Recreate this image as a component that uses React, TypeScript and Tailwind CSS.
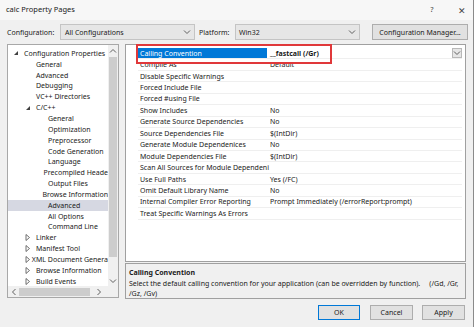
import React from "react";

const Chev = ({ dir = "down", className = "" }: { dir?: "down" | "up" | "left" | "right"; className?: string }) => {
  const paths: Record<string, string> = {
    down: "M1 2.5 L4 5.5 L7 2.5",
    up: "M1 5.5 L4 2.5 L7 5.5",
    left: "M5.5 1 L2.5 4 L5.5 7",
    right: "M2.5 1 L5.5 4 L2.5 7",
  };
  return (
    <svg width="8" height="8" viewBox="0 0 8 8" className={className}>
      <path d={paths[dir]} fill="none" stroke="#606060" strokeWidth="1" />
    </svg>
  );
};

const OpenArrow = () => (
  <svg width="6" height="6" viewBox="0 0 6 6">
    <polygon points="5,1 5,5 1,5" fill="#404040" />
  </svg>
);
const ClosedArrow = () => (
  <svg width="6" height="7" viewBox="0 0 6 7">
    <polygon points="1,0.5 4.5,3.5 1,6.5" fill="none" stroke="#606060" strokeWidth="0.9" />
  </svg>
);

type TreeItem = { t: string; lvl: number; arrow?: "open" | "closed"; sel?: boolean };
const tree: TreeItem[] = [
  { t: "Configuration Properties", lvl: 0, arrow: "open" },
  { t: "General", lvl: 1 },
  { t: "Advanced", lvl: 1 },
  { t: "Debugging", lvl: 1 },
  { t: "VC++ Directories", lvl: 1 },
  { t: "C/C++", lvl: 1, arrow: "open" },
  { t: "General", lvl: 2 },
  { t: "Optimization", lvl: 2 },
  { t: "Preprocessor", lvl: 2 },
  { t: "Code Generation", lvl: 2 },
  { t: "Language", lvl: 2 },
  { t: "Precompiled Heade", lvl: 2 },
  { t: "Output Files", lvl: 2 },
  { t: "Browse Information", lvl: 2 },
  { t: "Advanced", lvl: 2, sel: true },
  { t: "All Options", lvl: 2 },
  { t: "Command Line", lvl: 2 },
  { t: "Linker", lvl: 1, arrow: "closed" },
  { t: "Manifest Tool", lvl: 1, arrow: "closed" },
  { t: "XML Document Genera", lvl: 1, arrow: "closed" },
  { t: "Browse Information", lvl: 1, arrow: "closed" },
  { t: "Build Events", lvl: 1, arrow: "closed" },
];

const props: [string, string][] = [
  ["Calling Convention", "__fastcall (/Gr)"],
  ["Compile As", "Default"],
  ["Disable Specific Warnings", ""],
  ["Forced Include File", ""],
  ["Forced #using File", ""],
  ["Show Includes", "No"],
  ["Generate Source Dependencies", "No"],
  ["Source Dependencies File", "$(IntDir)"],
  ["Generate Module Dependenices", "No"],
  ["Module Dependencies File", "$(IntDir)"],
  ["Scan All Sources for Module Dependeni", ""],
  ["Use Full Paths", "Yes (/FC)"],
  ["Omit Default Library Name", "No"],
  ["Internal Compiler Error Reporting", "Prompt Immediately (/errorReport:prompt)"],
  ["Treat Specific Warnings As Errors", ""],
];

const padFor = (lvl: number) => (lvl === 0 ? "pl-[5px]" : lvl === 1 ? "pl-[17px]" : "pl-[29px]");

export default function App() {
  return (
    <div className="w-[474px] h-[327px] bg-[#f0f0f0] overflow-hidden text-[7px] leading-none text-[#1a1a1a] font-['Noto_Sans',sans-serif] flex flex-col border-r border-[#8a8a8a]">
      {/* title */}
      <div className="h-[20px] bg-[#f7f7f7] flex items-center pl-[6px]">
        <span className="text-[7.5px]">calc Property Pages</span>
        <div className="ml-auto flex items-center">
          <span className="w-[20px] text-center text-[7.5px] text-[#444]">?</span>
          <span className="w-[20px] ml-[10px] mr-[1px] text-center text-[9px] text-[#444]">✕</span>
        </div>
      </div>
      {/* config row */}
      <div className="mt-[4px] h-[16px] flex items-center pl-[7px]">
        <span className="w-[53px]">Configuration:</span>
        <div className="w-[135px] h-[16px] bg-[#e6e6e6] border border-[#c4c4c4] flex items-center pl-[4px] pr-[3px]">
          <span>All Configurations</span>
          <Chev className="ml-auto" />
        </div>
        <span className="ml-[4px] w-[36px]">Platform:</span>
        <div className="w-[125px] h-[16px] bg-[#e6e6e6] border border-[#c4c4c4] flex items-center pl-[3px] pr-[3px]">
          <span>Win32</span>
          <Chev className="ml-auto" />
        </div>
        <div className="ml-[12px] w-[96px] h-[16px] bg-[#e1e1e1] border border-[#adadad] flex items-center justify-center">
          Configuration Manager...
        </div>
      </div>
      {/* main */}
      <div className="mt-[4px] h-[255px] flex pl-[7px]">
        {/* tree */}
        <div className="w-[112px] h-[254px] bg-white border border-[#a8a8a8] flex flex-col">
          <div className="flex-1 flex min-h-0">
            <div className="flex-1 min-w-0 overflow-hidden pt-[3px]">
              {tree.map((it, i) => (
                <div
                  key={i}
                  className={`h-[10.85px] flex items-center whitespace-nowrap ${padFor(it.lvl)} ${it.sel ? "bg-[#d6d8e2]" : ""}`}
                >
                  <span className="w-[11px] flex items-center">
                    {it.arrow === "open" ? <OpenArrow /> : it.arrow === "closed" ? <ClosedArrow /> : null}
                  </span>
                  <span>{it.t}</span>
                </div>
              ))}
            </div>
            <div className="w-[10px] bg-[#f0f0f0] flex flex-col items-center">
              <div className="h-[12px] flex items-center justify-center"><Chev dir="up" /></div>
              <div className="w-[8px] h-[200px] bg-[#cdcdcd]" />
              <div className="flex-1" />
              <div className="h-[11px] flex items-center justify-center"><Chev dir="down" /></div>
            </div>
          </div>
          <div className="h-[11px] flex items-center bg-[#f0f0f0]">
            <div className="w-[11px] flex justify-center"><Chev dir="left" /></div>
            <div className="w-[71px] h-[8px] bg-[#cdcdcd]" />
            <div className="flex-1 flex justify-center"><Chev dir="right" /></div>
            <div className="w-[10px] h-[11px] bg-[#f0f0f0]" />
          </div>
        </div>
        {/* right column */}
        <div className="ml-[6px] w-[341px] flex flex-col">
          <div className="relative h-[218px] bg-white border border-[#a0a0a0] pt-[3px]">
            {props.map(([n, v], i) => (
              <div key={i} className="h-[11.45px] flex">
                <div className="w-[12px]" />
                <div className="flex-1 flex border-b border-[#efefef] mr-[3px]">
                  <div
                    className={`w-[129px] flex items-center pl-[2px] whitespace-nowrap ${i === 0 ? "bg-[#0078d7] text-white" : ""}`}
                  >
                    {n}
                  </div>
                  <div className={`flex-1 flex items-center pl-[3px] whitespace-nowrap ${i === 0 ? "font-bold" : ""}`}>
                    {v}
                    {i === 0 && (
                      <div className="ml-auto w-[10px] h-[10px] bg-[#e6e6e6] border border-[#b8b8b8] flex items-center justify-center">
                        <Chev dir="down" />
                      </div>
                    )}
                  </div>
                </div>
              </div>
            ))}
            <div className="absolute left-[10px] top-[-1px] w-[196px] h-[20px] border-2 border-[#e0383a]" />
          </div>
          <div className="mt-[1px] h-[36px] bg-[#f0f0f0] border border-[#a0a0a0] pl-[3px] pt-[4px] leading-[10px]">
            <div className="font-bold">Calling Convention</div>
            <div className="mt-[1px]">
              Select the default calling convention for your application (can be overridden by function).&nbsp;&nbsp;&nbsp;&nbsp; (/Gd, /Gr,
              <br />
              /Gz, /Gv)
            </div>
          </div>
        </div>
      </div>
      {/* buttons */}
      <div className="mt-[6px] h-[15px] flex justify-end pr-[8px]">
        <div className="w-[42px] h-[15px] bg-[#e1e1e1] border border-[#0078d7] flex items-center justify-center">OK</div>
        <div className="ml-[10px] w-[43px] h-[15px] bg-[#e1e1e1] border border-[#adadad] flex items-center justify-center">Cancel</div>
        <div className="ml-[9px] w-[43px] h-[15px] bg-[#e1e1e1] border border-[#adadad] flex items-center justify-center">Apply</div>
      </div>
    </div>
  );
}
